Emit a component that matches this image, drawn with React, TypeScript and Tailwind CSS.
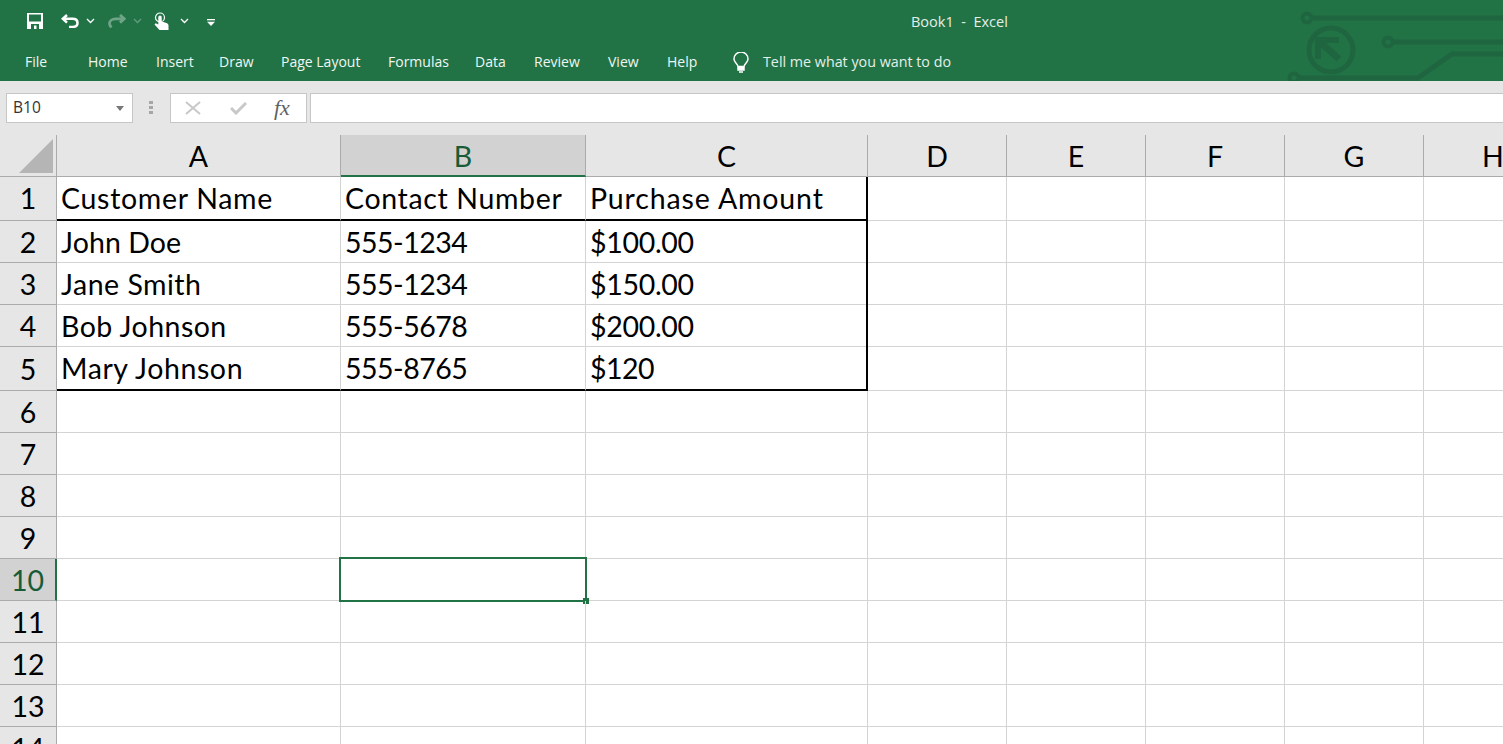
import React from "react";

const rowsData: [number, string, string, string, string, string, string, string][] = [
  [1, "Customer Name", "Contact Number", "Purchase Amount", "tracking-[0.7px]", "tracking-[0.65px]", "tracking-[0.87px]", ""],
  [2, "John Doe", "555-1234", "$100.00", "tracking-[0.1px]", "tracking-[-0.5px]", "tracking-[-0.3px]", "pt-[2px]"],
  [3, "Jane Smith", "555-1234", "$150.00", "tracking-[0.5px]", "tracking-[-0.5px]", "tracking-[-0.3px]", "pt-[2px]"],
  [4, "Bob Johnson", "555-5678", "$200.00", "tracking-[0.45px]", "tracking-[-0.5px]", "tracking-[-0.3px]", "pt-[2px]"],
  [5, "Mary Johnson", "555-8765", "$120", "tracking-[0.6px]", "tracking-[-0.5px]", "tracking-[-0.5px]", "pt-[1px]"],
];
const emptyRows = [6, 7, 8, 9, 10, 11, 12, 13, 14];
const tabs = ["Home", "Insert", "Draw", "Page Layout", "Formulas", "Data", "Review", "View", "Help"];
const plainCols = ["D", "E", "F", "G", "H"];

function heightClass(n: number) {
  return n === 1 || n === 5 ? "h-[44px]" : "h-[42px]";
}

function Chevron({ dim }: { dim?: boolean }) {
  return (
    <svg width="9" height="6" viewBox="0 0 9 6" className={dim ? "opacity-30" : ""}>
      <path d="M1 1l3.500 3.500L8 1" fill="none" stroke="#fff" strokeWidth="1.300" />
    </svg>
  );
}

function Circuit() {
  return (
    <svg className="absolute left-[1250px] top-0" width="253" height="81" viewBox="0 0 253 81" fill="none" stroke="#1f6640" strokeWidth="5">
      <circle cx="57" cy="18" r="4.500" strokeWidth="4" />
      <path d="M62 18H253" />
      <circle cx="81" cy="50" r="22" />
      <path d="M68 59V40H89" strokeWidth="6" />
      <path d="M70 42L89 59" strokeWidth="7" />
      <circle cx="138" cy="42" r="4.500" strokeWidth="4" />
      <path d="M143 42H253" />
      <circle cx="44" cy="78" r="4.500" strokeWidth="4" />
      <path d="M49 78H168L202 54H253" />
    </svg>
  );
}

export default function App() {
  return (
    <div className="relative flex h-[744px] w-[1503px] flex-col overflow-hidden bg-white font-['Open_Sans','Noto_Sans',sans-serif]">
      <header className="relative h-[81px] shrink-0 bg-[#217346] text-white">
        <Circuit />
        <div className="relative flex h-[41px] items-center pl-[27px]">
          <svg width="16" height="16" viewBox="0 0 16 16">
            <path d="M0 0H16V16H0Z" fill="#fff" />
            <path d="M2 1.500H14V8.500H2Z" fill="#217346" />
            <path d="M4 11H12V16H9.500V12.500H7V16H4Z" fill="#217346" />
          </svg>
          <svg className="ml-[18px]" width="18" height="14" viewBox="0 0 18 14" fill="none" stroke="#fff" strokeWidth="2.500">
            <path d="M6 1L1.800 4.800L6 8.600" />
            <path d="M2 4.800H11.500C14.500 4.800 16.500 6.500 16.500 9C16.500 11.500 14.500 13 11.500 13H8" />
          </svg>
          <span className="ml-[7px] flex"><Chevron /></span>
          <svg className="ml-[13px] opacity-35" width="18" height="14" viewBox="0 0 18 14" fill="none" stroke="#fff" strokeWidth="2.800">
            <path d="M12 1L16.200 4.800L12 8.600" />
            <path d="M16 4.800H7.500C4 4.800 1.500 7 1.500 9.500C1.500 11 2.500 12.500 3.500 13.500" />
          </svg>
          <span className="ml-[7px] flex"><Chevron dim /></span>
          <svg className="ml-[12px]" width="15" height="18" viewBox="0 0 15 18">
            <circle cx="6" cy="5.500" r="4.500" fill="none" stroke="#fff" strokeWidth="1.200" />
            <path d="M4.300 5.300a1.700 1.700 0 0 1 3.400 0V9.500L12.500 11c1.300.5 2 1.200 2 2.500V18H5.500L.5 12.500l1.200-1.300 2.600 1.300Z" fill="#fff" />
          </svg>
          <span className="ml-[11px] flex"><Chevron /></span>
          <svg className="ml-[18px] mt-[3px]" width="8" height="7" viewBox="0 0 8 7" fill="#fff">
            <path d="M0 0H8V1.300H0Z" />
            <path d="M0 2.800H8L4 7Z" />
          </svg>
        </div>
        <div className="absolute left-[911px] top-[12px] text-[14.5px] leading-[20px] text-[#e4efe9] whitespace-pre">Book1  -  Excel</div>
        <nav className="relative flex h-[40px] items-start pt-[11px] text-[14px] leading-[20px] text-[#f0f6f2]">
          <span className="ml-[25px] w-[63px]">File</span>
          <div className="grid grid-cols-[68px_63px_62px_107px_87px_59px_74px_59px_66px]">
            {tabs.map((t) => (
              <span key={t}>{t}</span>
            ))}
          </div>
          <svg width="16" height="21" viewBox="0 0 16 21" fill="none" stroke="#fff" strokeWidth="1.500">
            <path d="M5 14.500C4.500 11.500 1 10.500 1 7a7 7 0 0 1 14 0c0 3.500-3.500 4.500-4 7.500H5Z" />
            <path d="M5 15.500H11V18H5Z" fill="#fff" />
            <path d="M6 20H10" />
          </svg>
          <span className="ml-[14px] text-[14.3px] text-[#e4efe9]">Tell me what you want to do</span>
        </nav>
      </header>

      <section className="flex h-[54px] shrink-0 items-start bg-[#e6e6e6] pt-[12px]">
        <div className="ml-[6px] flex h-[30px] w-[127px] items-center justify-between border border-[#c6c6c6] bg-white pl-[6px] pr-[8px] text-[15.5px] text-[#333]">
          <span>B10</span>
          <svg width="8" height="5" viewBox="0 0 8 5" fill="#777"><path d="M0 0H8L4 5Z" /></svg>
        </div>
        <div className="ml-[16px] mt-[8px] flex w-[4px] flex-col gap-[2px]">
          <span className="h-[3px] w-[4px] bg-[#a6a6a6]" />
          <span className="h-[3px] w-[4px] bg-[#a6a6a6]" />
          <span className="h-[3px] w-[4px] bg-[#a6a6a6]" />
        </div>
        <div className="ml-[17px] flex h-[30px] w-[137px] items-center border border-[#c6c6c6] bg-white pl-[14px]">
          <svg width="16" height="14" viewBox="0 0 16 14" fill="none" stroke="#c8c8c8" strokeWidth="2">
            <path d="M1 1L15 13M15 1L1 13" />
          </svg>
          <svg className="ml-[29px]" width="17" height="14" viewBox="0 0 17 14" fill="none" stroke="#c8c8c8" strokeWidth="3">
            <path d="M1 7L6 12L16 2" />
          </svg>
          <span className="ml-[27px] font-['Liberation_Serif',serif] text-[22px] italic leading-none text-[#5f5f5f]">fx</span>
        </div>
        <div className="ml-[3px] h-[30px] flex-1 border border-r-0 border-[#c6c6c6] bg-white" />
      </section>

      <section className="grid flex-1 grid-cols-[57px_284px_245px_282px_139px_139px_139px_139px_139px] content-start overflow-hidden bg-white font-['Lato','Carlito',sans-serif] text-[28.5px] leading-none text-black">
        {/* column headers */}
        <div className="relative h-[42px] border-r border-b border-[#ababab] bg-[#e6e6e6]">
          <svg className="absolute left-[19px] top-[4px]" width="34" height="34" viewBox="0 0 34 34" fill="#b5b5b5">
            <path d="M0 34L34 0V34Z" />
          </svg>
        </div>
        <div className="flex h-[42px] items-center justify-center border-r border-b border-[#ababab] bg-[#e6e6e6] pt-[2px]">A</div>
        <div className="flex h-[42px] items-center justify-center border-r border-b-2 border-r-[#ababab] border-b-[#217346] bg-[#d2d2d2] pt-[2px] text-[#185c37]">B</div>
        <div className="flex h-[42px] items-center justify-center border-r border-b border-[#ababab] bg-[#e6e6e6] pt-[2px]">C</div>
        {plainCols.map((c) => (
          <div key={c} className="flex h-[42px] items-center justify-center border-r border-b border-[#ababab] bg-[#e6e6e6] pt-[2px]">{c}</div>
        ))}

        {/* data rows */}
        {rowsData.map(([n, a, b, c, ta, tb, tc, pad]) => {
          const h = heightClass(n);
          const bottom = n === 1 || n === 5 ? "border-b-2 border-b-black" : "border-b border-b-[#d4d4d4]";
          return (
            <React.Fragment key={n}>
              <div className={`flex ${h} ${pad} items-center justify-center border-r border-b border-[#ababab] bg-[#e6e6e6]`}>{n}</div>
              <div className={`flex ${h} ${pad} ${ta} items-center border-r border-r-[#d4d4d4] ${bottom} pl-[4px]`}>{a}</div>
              <div className={`flex ${h} ${pad} ${tb} items-center border-r border-r-[#d4d4d4] ${bottom} pl-[4px]`}>{b}</div>
              <div className={`${h} border-r-2 border-r-black`}>
                <div className={`flex h-full ${pad} ${tc} items-center ${bottom} pl-[4px]`}>{c}</div>
              </div>
              {plainCols.map((p) => (
                <div key={p} className={`${h} border-r border-b border-[#d4d4d4]`} />
              ))}
            </React.Fragment>
          );
        })}

        {/* empty rows */}
        {emptyRows.map((n) => (
          <React.Fragment key={n}>
            <div
              className={
                n === 10
                  ? "flex h-[42px] items-center justify-center border-r-2 border-b border-r-[#217346] border-b-[#ababab] bg-[#d2d2d2] pt-[2px] text-[#185c37]"
                  : "flex h-[42px] items-center justify-center border-r border-b border-[#ababab] bg-[#e6e6e6] pt-[2px]"
              }
            >
              {n}
            </div>
            <div className="h-[42px] border-r border-b border-[#d4d4d4]" />
            <div className="relative h-[42px] border-r border-b border-[#d4d4d4]">
              {n === 10 && (
                <div className="absolute -top-[2px] -left-[2px] -right-[2px] -bottom-[2px] border-2 border-[#217346]">
                  <span className="absolute -right-[4px] -bottom-[4px] h-[6px] w-[6px] bg-[#217346]" />
                </div>
              )}
            </div>
            <div className="h-[42px] border-r border-b border-[#d4d4d4]" />
            {plainCols.map((p) => (
              <div key={p} className="h-[42px] border-r border-b border-[#d4d4d4]" />
            ))}
          </React.Fragment>
        ))}
      </section>
    </div>
  );
}
